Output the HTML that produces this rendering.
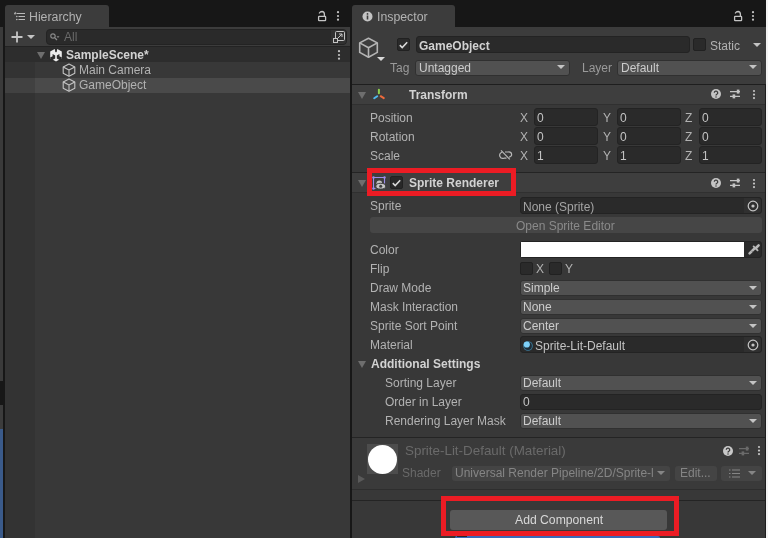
<!DOCTYPE html>
<html><head><meta charset="utf-8">
<style>
*{box-sizing:border-box;margin:0;padding:0}
html,body{width:768px;height:538px;overflow:hidden;background:#171717;font-family:"Liberation Sans",sans-serif;font-size:12px;color:#b2b2b2}
.a{position:absolute}
.t{position:absolute;white-space:nowrap;line-height:14px}
.b{font-weight:bold;color:#d2d2d2}
.fld{position:absolute;background:#2a2a2a;border:1px solid #232323;border-radius:3px}
.dd{position:absolute;background:#515151;border:1px solid #303030;border-radius:3px}
.arr{position:absolute;width:0;height:0;border-left:4px solid transparent;border-right:4px solid transparent;border-top:4px solid #c4c4c4}
.fold{position:absolute;width:0;height:0;border-left:4px solid transparent;border-right:4px solid transparent;border-top:7px solid #6e6e6e}
.cb{position:absolute;background:#2a2a2a;border:1px solid #212121;border-radius:2px}
.sep{position:absolute;height:1px;background:#1e1e1e}
svg{position:absolute;overflow:visible}
.t{will-change:transform}
</style></head><body>
<!-- left strip -->
<div class="a" style="left:0;top:27px;width:3px;height:354px;background:#3a3a3a"></div>
<div class="a" style="left:0;top:405px;width:3px;height:24px;background:#3c3c3c"></div>
<div class="a" style="left:0;top:429px;width:3px;height:109px;background:#3a5a8a"></div>
<div class="a" style="left:766px;top:0;width:2px;height:538px;background:#f4f4f4"></div>

<!-- HIERARCHY -->
<div class="a" style="left:5px;top:5px;width:104px;height:23px;background:#3c3c3c;border-radius:3px 3px 0 0"></div>
<svg style="left:14px;top:11px" width="12" height="10" viewBox="0 0 12 10"><g stroke="#bababa" stroke-width="1.1" fill="none"><path d="M2.5 2.5H11M4.5 5.5H11M4.5 8.5H11"/></g><g fill="#bababa"><circle cx="1" cy="2.5" r="0.9"/><circle cx="2.8" cy="5.5" r="0.8"/><circle cx="2.8" cy="8.5" r="0.8"/><circle cx="1.6" cy="1.2" r="0.5"/></g></svg>
<div class="t" style="left:29px;top:10px;font-size:12.3px">Hierarchy</div>
<svg style="left:316px;top:10px" width="12" height="12" viewBox="0 0 12 12"><path d="M3.4 3Q4.3 1.5 6 1.5Q8.4 1.6 8.4 4.2V6" stroke="#c4c4c4" stroke-width="1.3" fill="none" stroke-linecap="round"/><rect x="2.6" y="6.4" width="7" height="4.2" rx="0.6" stroke="#c4c4c4" stroke-width="1.3" fill="none"/></svg>
<svg style="left:336px;top:11px" width="4" height="10" viewBox="0 0 4 10"><g fill="#c4c4c4"><circle cx="2" cy="1.2" r="1.1"/><circle cx="2" cy="5" r="1.1"/><circle cx="2" cy="8.7" r="1.1"/></g></svg>

<div class="a" style="left:5px;top:27px;width:345px;height:511px;background:#383838"></div>
<div class="a" style="left:5px;top:27px;width:345px;height:20px;background:#3c3c3c;border-bottom:1px solid #232323"></div>
<svg style="left:11px;top:31px" width="12" height="12" viewBox="0 0 12 12"><path d="M6 0.5v11M0.5 6h11" stroke="#c4c4c4" stroke-width="1.8"/></svg>
<div class="arr" style="left:27px;top:35px"></div>
<div class="fld" style="left:46px;top:29px;width:301px;height:16px;border-radius:4px"></div>
<div class="a" style="left:331px;top:30px;width:15px;height:14px;background:#313131;border-radius:0 3px 3px 0"></div>
<svg style="left:333px;top:31px" width="12" height="12" viewBox="0 0 12 12"><g stroke="#c4c4c4" stroke-width="1" fill="none"><rect x="2.5" y="0.5" width="9" height="9" rx="1"/><rect x="0.5" y="7.5" width="4" height="4" fill="#323232"/><path d="M4.5 7.5L9 3M6 3h3v3"/></g></svg>
<svg style="left:50px;top:33px" width="10" height="9" viewBox="0 0 10 9"><circle cx="3" cy="3" r="2.2" stroke="#8a8a8a" stroke-width="1.2" fill="none"/><path d="M4.6 4.6L7 7" stroke="#8a8a8a" stroke-width="1.3"/><path d="M6.5 3.3h3l-1.5 1.6z" fill="#8a8a8a"/></svg>
<div class="t" style="left:64px;top:30px;color:#6a6a6a">All</div>

<div class="a" style="left:5px;top:47px;width:345px;height:15px;background:#2d2d2d"></div>
<div class="a" style="left:5px;top:62px;width:30px;height:476px;background:#333333"></div>
<div class="a" style="left:35px;top:78px;width:315px;height:15px;background:#4a4a4a"></div>
<div class="a" style="left:5px;top:78px;width:30px;height:15px;background:#414141"></div>
<div class="fold" style="left:37px;top:52px"></div>
<svg style="left:50px;top:48px" width="12" height="14" viewBox="0 0 12 14"><path d="M6 0.3L11.8 3.6V10.3L6 13.6L0.2 10.3V3.6Z" fill="#ececec"/><g fill="#2d2d2d"><path d="M4.6 0L5.2 3.6L6 4.6L6.8 3.6L7.4 0z"/><path d="M0 9.6L2.6 8.3V5.9L5.2 7.4V10.6L1.6 12.6z"/><path d="M12 9.6L9.4 8.3V5.9L6.8 7.4V10.6L10.4 12.6z"/></g></svg>
<div class="t b" style="left:66px;top:48px">SampleScene*</div>
<svg style="left:62px;top:63px" width="14" height="14" viewBox="0 0 14 14"><g stroke="#c4c4c4" stroke-width="1.1" fill="none" stroke-linejoin="round"><path d="M7 1L12.8 4V10.2L7 13.2L1.2 10.2V4Z"/><path d="M1.2 4L7 7.1L12.8 4M7 7.1V13.2"/></g></svg>
<div class="t" style="left:79px;top:63px">Main Camera</div>
<svg style="left:62px;top:78px" width="14" height="14" viewBox="0 0 14 14"><g stroke="#c4c4c4" stroke-width="1.1" fill="none" stroke-linejoin="round"><path d="M7 1L12.8 4V10.2L7 13.2L1.2 10.2V4Z"/><path d="M1.2 4L7 7.1L12.8 4M7 7.1V13.2"/></g></svg>
<div class="t" style="left:79px;top:78px">GameObject</div>
<svg style="left:337px;top:50px" width="4" height="10" viewBox="0 0 4 10"><g fill="#c4c4c4"><circle cx="2" cy="1.2" r="1.1"/><circle cx="2" cy="5" r="1.1"/><circle cx="2" cy="8.7" r="1.1"/></g></svg>

<!-- INSPECTOR -->
<div class="a" style="left:352px;top:5px;width:103px;height:23px;background:#3c3c3c;border-radius:3px 3px 0 0"></div>
<svg style="left:362px;top:11px" width="11" height="11" viewBox="0 0 11 11"><circle cx="5.5" cy="5.5" r="5" fill="#c4c4c4"/><rect x="4.7" y="4.5" width="1.6" height="4" fill="#3c3c3c"/><circle cx="5.5" cy="2.9" r="0.9" fill="#3c3c3c"/></svg>
<div class="t" style="left:377px;top:10px;font-size:12.3px">Inspector</div>
<svg style="left:732px;top:10px" width="12" height="12" viewBox="0 0 12 12"><path d="M3.4 3Q4.3 1.5 6 1.5Q8.4 1.6 8.4 4.2V6" stroke="#c4c4c4" stroke-width="1.3" fill="none" stroke-linecap="round"/><rect x="2.6" y="6.4" width="7" height="4.2" rx="0.6" stroke="#c4c4c4" stroke-width="1.3" fill="none"/></svg>
<svg style="left:751px;top:11px" width="4" height="10" viewBox="0 0 4 10"><g fill="#c4c4c4"><circle cx="2" cy="1.2" r="1.1"/><circle cx="2" cy="5" r="1.1"/><circle cx="2" cy="8.7" r="1.1"/></g></svg>

<div class="a" style="left:352px;top:27px;width:414px;height:511px;background:#383838;border-right:1px solid #1e1e1e"></div>
<div class="a" style="left:352px;top:27px;width:414px;height:57px;background:#3c3c3c"></div>
<div class="sep" style="left:352px;top:84px;width:413px"></div>
<svg style="left:358px;top:37px" width="21" height="21" viewBox="0 0 21 21"><g stroke="#b4b4b4" stroke-width="1.6" fill="none" stroke-linejoin="round"><path d="M10.5 1.2L19.3 5.9V15.4L10.5 20.3L1.7 15.4V5.9Z"/><path d="M1.7 5.9L10.5 10.8L19.3 5.9M10.5 10.8V20.3"/></g></svg>
<div class="arr" style="left:377px;top:57px;border-width:4px 4px 4px 4px;border-top-color:#d8d8d8"></div>
<div class="cb" style="left:397px;top:38px;width:13px;height:13px"></div>
<svg style="left:399px;top:41px" width="9" height="8" viewBox="0 0 9 8"><path d="M0.8 4.2L3.2 6.5L8.2 1.2" stroke="#d8d8d8" stroke-width="1.6" fill="none"/></svg>
<div class="fld" style="left:416px;top:36px;width:274px;height:17px"></div>
<div class="t b" style="left:419px;top:39px">GameObject</div>
<div class="cb" style="left:693px;top:38px;width:13px;height:13px"></div>
<div class="t" style="left:710px;top:39px">Static</div>
<div class="arr" style="left:753px;top:43px"></div>
<div class="t" style="left:390px;top:61px;color:#9a9a9a">Tag</div>
<div class="dd" style="left:415px;top:60px;width:155px;height:16px"></div>
<div class="t" style="left:419px;top:61px;color:#cccccc">Untagged</div>
<div class="arr" style="left:557px;top:65px"></div>
<div class="t" style="left:582px;top:61px;color:#9a9a9a">Layer</div>
<div class="dd" style="left:617px;top:60px;width:145px;height:16px"></div>
<div class="t" style="left:621px;top:61px;color:#cccccc">Default</div>
<div class="arr" style="left:749px;top:65px"></div>

<!-- Transform header -->
<div class="a" style="left:352px;top:85px;width:413px;height:20px;background:#3e3e3e;border-bottom:1px solid #303030"></div>
<div class="fold" style="left:358px;top:92px"></div>
<svg style="left:372px;top:88px" width="14" height="12" viewBox="0 0 14 12"><path d="M6.9 1.8V5.3" stroke="#8fd14f" stroke-width="2" stroke-linecap="round"/><path d="M5.2 8.2L2.2 10.3" stroke="#4fb8ee" stroke-width="2" stroke-linecap="round"/><path d="M8.7 8.2L11.8 10.1" stroke="#ee6a3c" stroke-width="2" stroke-linecap="round"/></svg>
<div class="t b" style="left:409px;top:88px">Transform</div>
<svg style="left:711px;top:89px" width="10" height="10" viewBox="0 0 10 10"><circle cx="5" cy="5" r="5" fill="#c4c4c4"/><path d="M3.3 3.8a1.7 1.7 0 1 1 2.5 1.5c-0.6 0.3-0.8 0.6-0.8 1.2" stroke="#3e3e3e" stroke-width="1.3" fill="none"/><circle cx="5" cy="8" r="0.75" fill="#3e3e3e"/></svg>
<svg style="left:730px;top:89px" width="10" height="10" viewBox="0 0 10 10"><g stroke="#c4c4c4" stroke-width="1.3"><path d="M0 2.6H10M0 7.4H10"/></g><rect x="6.8" y="0.6" width="2.6" height="4" fill="#c4c4c4"/><rect x="2.6" y="5.4" width="2.6" height="4" fill="#c4c4c4"/></svg>
<svg style="left:752px;top:90px" width="4" height="10" viewBox="0 0 4 10"><g fill="#c4c4c4"><circle cx="2" cy="1" r="1.1"/><circle cx="2" cy="4.6" r="1.1"/><circle cx="2" cy="8.1" r="1.1"/></g></svg>

<div class="t" style="left:370px;top:111px">Position</div>
<div class="t" style="left:370px;top:130px">Rotation</div>
<div class="t" style="left:370px;top:149px">Scale</div>
<svg style="left:499px;top:149px" width="13" height="12" viewBox="0 0 13 12"><g stroke="#b8b8b8" stroke-width="1.2" fill="none"><path d="M3 3.2A3.4 3.1 0 0 0 5.2 9.2H7.5"/><path d="M6 3H9.2A3 2.6 0 0 1 10 8.2"/><path d="M2 1.3L10.8 10.4"/></g></svg>

<div class="t" style="left:520px;top:111px">X</div>
<div class="fld" style="left:534px;top:108px;width:64px;height:18px"></div>
<div class="t" style="left:537px;top:111px;color:#c4c4c4">0</div>
<div class="t" style="left:603px;top:111px">Y</div>
<div class="fld" style="left:617px;top:108px;width:64px;height:18px"></div>
<div class="t" style="left:620px;top:111px;color:#c4c4c4">0</div>
<div class="t" style="left:685px;top:111px">Z</div>
<div class="fld" style="left:699px;top:108px;width:63px;height:18px"></div>
<div class="t" style="left:702px;top:111px;color:#c4c4c4">0</div>
<div class="t" style="left:520px;top:130px">X</div>
<div class="fld" style="left:534px;top:127px;width:64px;height:18px"></div>
<div class="t" style="left:537px;top:130px;color:#c4c4c4">0</div>
<div class="t" style="left:603px;top:130px">Y</div>
<div class="fld" style="left:617px;top:127px;width:64px;height:18px"></div>
<div class="t" style="left:620px;top:130px;color:#c4c4c4">0</div>
<div class="t" style="left:685px;top:130px">Z</div>
<div class="fld" style="left:699px;top:127px;width:63px;height:18px"></div>
<div class="t" style="left:702px;top:130px;color:#c4c4c4">0</div>
<div class="t" style="left:520px;top:149px">X</div>
<div class="fld" style="left:534px;top:146px;width:64px;height:18px"></div>
<div class="t" style="left:537px;top:149px;color:#c4c4c4">1</div>
<div class="t" style="left:603px;top:149px">Y</div>
<div class="fld" style="left:617px;top:146px;width:64px;height:18px"></div>
<div class="t" style="left:620px;top:149px;color:#c4c4c4">1</div>
<div class="t" style="left:685px;top:149px">Z</div>
<div class="fld" style="left:699px;top:146px;width:63px;height:18px"></div>
<div class="t" style="left:702px;top:149px;color:#c4c4c4">1</div>

<!-- Sprite Renderer -->
<div class="sep" style="left:352px;top:172px;width:413px;background:#242424"></div>
<div class="a" style="left:352px;top:173px;width:413px;height:20px;background:#3e3e3e;border-bottom:1px solid #303030"></div>
<div class="fold" style="left:358px;top:180px"></div>
<svg style="left:372px;top:176px" width="14" height="14" viewBox="0 0 14 14"><g stroke="#9c8ce8" stroke-width="1.1" fill="none"><path d="M1.5 12.5V1.5H12.5V7.5"/><path d="M1.5 12.5H3.5"/></g><g fill="#9c8ce8"><circle cx="1.5" cy="1.5" r="1.2"/><circle cx="12.5" cy="1.5" r="1.2"/><circle cx="1.5" cy="12.5" r="1.2"/></g><circle cx="7.3" cy="7.2" r="2.8" fill="#c4c4c4"/><ellipse cx="8.7" cy="10.2" rx="4.9" ry="2.9" fill="#c4c4c4" stroke="#3e3e3e" stroke-width="1"/><circle cx="8.7" cy="10.2" r="1.5" fill="#3e3e3e"/></svg>
<div class="cb" style="left:390px;top:176px;width:13px;height:13px;background:#282828"></div>
<svg style="left:392px;top:179px" width="9" height="8" viewBox="0 0 9 8"><path d="M0.8 4.2L3.2 6.5L8.2 1.2" stroke="#d8d8d8" stroke-width="1.6" fill="none"/></svg>
<div class="t b" style="left:409px;top:176px">Sprite Renderer</div>
<svg style="left:711px;top:178px" width="10" height="10" viewBox="0 0 10 10"><circle cx="5" cy="5" r="5" fill="#c4c4c4"/><path d="M3.3 3.8a1.7 1.7 0 1 1 2.5 1.5c-0.6 0.3-0.8 0.6-0.8 1.2" stroke="#3e3e3e" stroke-width="1.3" fill="none"/><circle cx="5" cy="8" r="0.75" fill="#3e3e3e"/></svg>
<svg style="left:730px;top:178px" width="10" height="10" viewBox="0 0 10 10"><g stroke="#c4c4c4" stroke-width="1.3"><path d="M0 2.6H10M0 7.4H10"/></g><rect x="6.8" y="0.6" width="2.6" height="4" fill="#c4c4c4"/><rect x="2.6" y="5.4" width="2.6" height="4" fill="#c4c4c4"/></svg>
<svg style="left:752px;top:179px" width="4" height="10" viewBox="0 0 4 10"><g fill="#c4c4c4"><circle cx="2" cy="1" r="1.1"/><circle cx="2" cy="4.6" r="1.1"/><circle cx="2" cy="8.1" r="1.1"/></g></svg>
<div class="a" style="left:367px;top:168px;width:149px;height:28px;border:5px solid #ec1c24"></div>

<div class="t" style="left:370px;top:199px">Sprite</div>
<div class="fld" style="left:520px;top:197px;width:242px;height:17px"></div>
<div class="a" style="left:744px;top:198px;width:17px;height:15px;background:#303030;border-radius:0 3px 3px 0"></div>
<svg style="left:747px;top:200px" width="12" height="12" viewBox="0 0 12 12"><circle cx="6" cy="6" r="4.8" stroke="#c4c4c4" stroke-width="1.2" fill="none"/><circle cx="6" cy="6" r="1.6" fill="#c4c4c4"/></svg>
<div class="t" style="left:523px;top:200px;color:#a4a4a4">None (Sprite)</div>
<div class="a" style="left:370px;top:217px;width:392px;height:16px;background:#464646;border-radius:3px"></div>
<div class="t" style="left:516px;top:219px;color:#8a8a8a">Open Sprite Editor</div>

<div class="t" style="left:370px;top:243px">Color</div>
<div class="fld" style="left:520px;top:241px;width:242px;height:17px"></div>
<div class="a" style="left:521px;top:242px;width:223px;height:15px;background:#ffffff"></div>
<svg style="left:748px;top:243px" width="12" height="12" viewBox="0 0 12 12"><g stroke="#b8b8b8" stroke-linecap="round"><path d="M1.6 10.4L6.6 5.4" stroke-width="2.6"/><path d="M5.6 3.4L9.6 7.4" stroke-width="1.8"/><path d="M8 5L10.6 2.4" stroke-width="2.6"/></g><path d="M3.5 7.8L4.5 8.8" stroke="#555" stroke-width="0.8"/></svg>

<div class="t" style="left:370px;top:262px">Flip</div>
<div class="cb" style="left:520px;top:262px;width:13px;height:13px"></div>
<div class="t" style="left:536px;top:262px">X</div>
<div class="cb" style="left:549px;top:262px;width:13px;height:13px"></div>
<div class="t" style="left:565px;top:262px">Y</div>

<div class="t" style="left:370px;top:281px">Draw Mode</div>
<div class="dd" style="left:520px;top:280px;width:242px;height:16px"></div>
<div class="t" style="left:523px;top:281px;color:#cccccc">Simple</div>
<div class="arr" style="left:749px;top:286px"></div>

<div class="t" style="left:370px;top:300px">Mask Interaction</div>
<div class="dd" style="left:520px;top:299px;width:242px;height:16px"></div>
<div class="t" style="left:523px;top:300px;color:#cccccc">None</div>
<div class="arr" style="left:749px;top:305px"></div>

<div class="t" style="left:370px;top:319px">Sprite Sort Point</div>
<div class="dd" style="left:520px;top:318px;width:242px;height:16px"></div>
<div class="t" style="left:523px;top:319px;color:#cccccc">Center</div>
<div class="arr" style="left:749px;top:324px"></div>

<div class="t" style="left:370px;top:338px">Material</div>
<div class="fld" style="left:520px;top:336px;width:242px;height:17px"></div>
<div class="a" style="left:744px;top:337px;width:17px;height:15px;background:#303030;border-radius:0 3px 3px 0"></div>
<svg style="left:747px;top:339px" width="12" height="12" viewBox="0 0 12 12"><circle cx="6" cy="6" r="4.8" stroke="#c4c4c4" stroke-width="1.2" fill="none"/><circle cx="6" cy="6" r="1.6" fill="#c4c4c4"/></svg>
<svg style="left:523px;top:340.5px" width="10" height="10" viewBox="0 0 10 10"><circle cx="5" cy="5" r="4.8" fill="#3a7c9e"/><circle cx="5" cy="5" r="3.9" fill="#1e2d38"/><circle cx="3.8" cy="3.5" r="3.1" fill="#7dd0f8"/></svg>
<div class="t" style="left:535px;top:339px;color:#c4c4c4">Sprite-Lit-Default</div>

<div class="fold" style="left:358px;top:361px"></div>
<div class="t b" style="left:371px;top:357px">Additional Settings</div>
<div class="t" style="left:385px;top:376px">Sorting Layer</div>
<div class="dd" style="left:520px;top:375px;width:242px;height:16px"></div>
<div class="t" style="left:523px;top:376px;color:#cccccc">Default</div>
<div class="arr" style="left:749px;top:381px"></div>
<div class="t" style="left:385px;top:395px">Order in Layer</div>
<div class="fld" style="left:520px;top:394px;width:242px;height:16px"></div>
<div class="t" style="left:523px;top:395px;color:#c4c4c4">0</div>
<div class="t" style="left:385px;top:414px">Rendering Layer Mask</div>
<div class="dd" style="left:520px;top:413px;width:242px;height:16px"></div>
<div class="t" style="left:523px;top:414px;color:#cccccc">Default</div>
<div class="arr" style="left:749px;top:419px"></div>

<!-- Material -->
<div class="sep" style="left:352px;top:437px;width:413px;background:#242424"></div>
<div class="a" style="left:352px;top:438px;width:413px;height:52px;background:#3a3a3a"></div>
<div class="a" style="left:367px;top:444px;width:31px;height:30px;background:#4d4d4d"></div>
<div class="a" style="left:368px;top:445px;width:29px;height:29px;border-radius:50%;background:#ffffff"></div>
<div class="t" style="left:405px;top:444px;color:#6a6a6a;font-size:13.4px">Sprite-Lit-Default (Material)</div>
<div class="t" style="left:402px;top:466px;color:#6a6a6a">Shader</div>
<div class="a" style="left:358px;top:475px;width:0;height:0;border-top:4px solid transparent;border-bottom:4px solid transparent;border-left:7px solid #5a5a5a"></div>
<div class="a" style="left:452px;top:466px;width:218px;height:15px;background:#444;border-radius:3px"></div>
<div class="t" style="left:455px;top:466px;color:#858585">Universal Render Pipeline/2D/Sprite-l</div>
<div class="arr" style="left:657px;top:471px;border-top-color:#858585"></div>
<div class="a" style="left:675px;top:466px;width:42px;height:15px;background:#444;border-radius:3px"></div>
<div class="t" style="left:680px;top:466px;color:#858585">Edit...</div>
<div class="a" style="left:721px;top:466px;width:41px;height:15px;background:#444;border-radius:3px"></div>
<svg style="left:729px;top:469px" width="11" height="9" viewBox="0 0 11 9"><g stroke="#858585" stroke-width="1.1"><path d="M3 1H11M3 4.5H11M3 8H11M0 1h1.5M0 4.5h1.5M0 8h1.5"/></g></svg>
<div class="arr" style="left:748px;top:471px;border-top-color:#858585"></div>
<svg style="left:723px;top:446px" width="10" height="10" viewBox="0 0 10 10"><circle cx="5" cy="5" r="5" fill="#c8c8c8"/><path d="M3.3 3.8a1.7 1.7 0 1 1 2.5 1.5c-0.6 0.3-0.8 0.6-0.8 1.2" stroke="#3a3a3a" stroke-width="1.3" fill="none"/><circle cx="5" cy="8" r="0.75" fill="#3a3a3a"/></svg>
<svg style="left:739px;top:446px" width="10" height="10" viewBox="0 0 10 10"><g stroke="#6a6a6a" stroke-width="1.3"><path d="M0 2.6H10M0 7.4H10"/></g><rect x="6.8" y="0.6" width="2.6" height="4" fill="#6a6a6a"/><rect x="2.6" y="5.4" width="2.6" height="4" fill="#6a6a6a"/></svg>
<svg style="left:757px;top:446px" width="4" height="10" viewBox="0 0 4 10"><g fill="#c4c4c4"><circle cx="2" cy="1" r="1.1"/><circle cx="2" cy="4.6" r="1.1"/><circle cx="2" cy="8.1" r="1.1"/></g></svg>
<div class="a" style="left:352px;top:489px;width:413px;height:1px;background:#2e2e2e"></div>
<div class="sep" style="left:352px;top:500px;width:413px;background:#242424"></div>

<div class="a" style="left:450px;top:510px;width:217px;height:20px;background:#585858;border-radius:3px"></div>
<div class="t" style="left:515px;top:513px;color:#d8d8d8;font-size:12.2px">Add Component</div>
<div class="a" style="left:455px;top:536px;width:205px;height:2px;background:#3a6ab8;border-radius:2px 2px 0 0"></div><div class="a" style="left:457px;top:536px;width:10px;height:1px;background:#2a2a2a"></div>
<div class="a" style="left:441px;top:496px;width:238px;height:40px;border:5px solid #ec1c24"></div>

</body></html>
